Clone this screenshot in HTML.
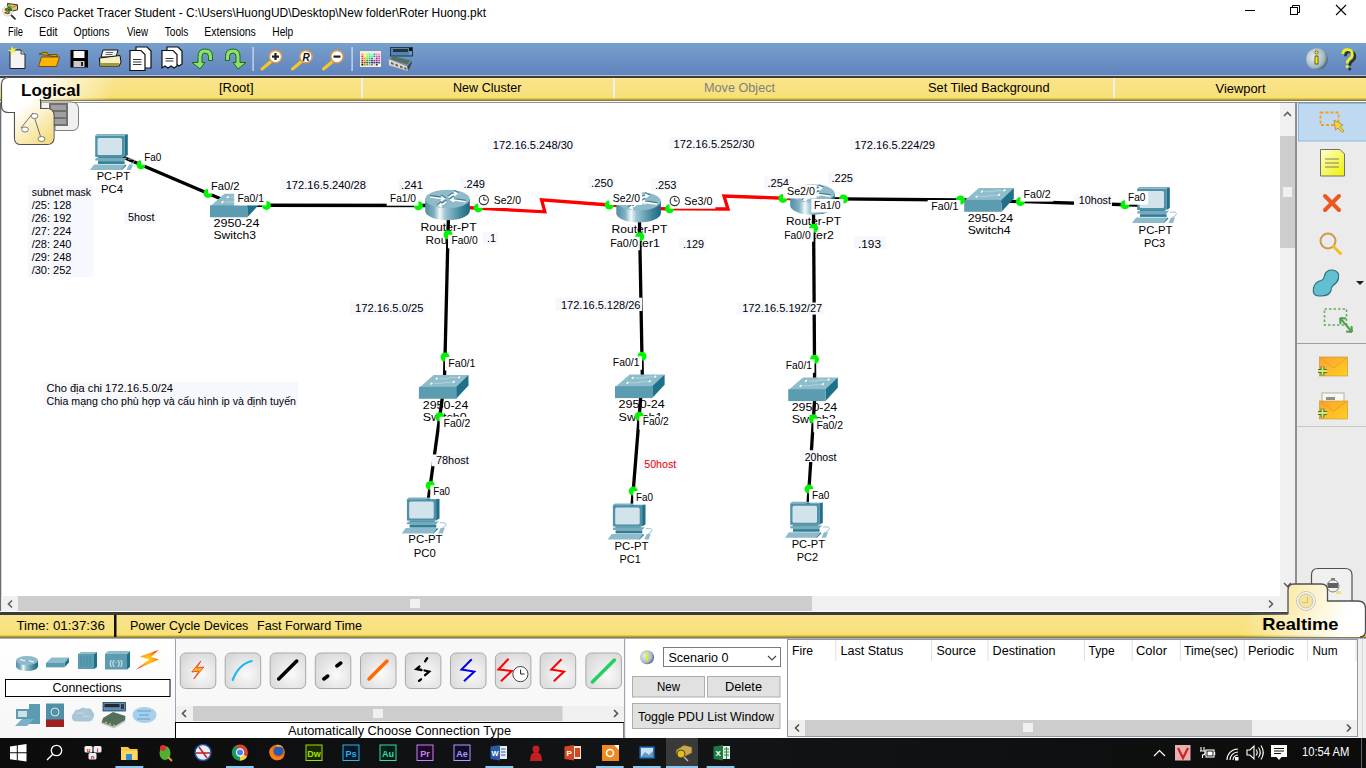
<!DOCTYPE html><html><head><meta charset="utf-8"><style>html,body{margin:0;padding:0;overflow:hidden;background:#fff}svg{display:block}text{font-family:"Liberation Sans",sans-serif}</style></head><body><svg width="1366" height="768" viewBox="0 0 1366 768"><rect x="0" y="0" width="1366" height="768" fill="#ffffff" /><path d="M7.5 3.5 L17.5 4.8 L17.5 9.8 L10.5 11.5 L7.5 9.5 Z" fill="#e8c070" stroke="#2a2010" stroke-width="0.9"/><path d="M8 4 L12.5 7.5 L17.5 5" fill="none" stroke="#806020" stroke-width="0.7"/><circle cx="7.5" cy="11" r="5" fill="#f4f4f4" stroke="#c0c8d0" stroke-width="0.8"/><path d="M7.5 6 A5 5 0 0 1 12.5 11 L7.5 11 Z" fill="#109010"/><text x="7.3" y="14.2" font-size="8.5" font-weight="bold" fill="#e0b800" stroke="#302000" stroke-width="0.5" text-anchor="middle">S</text><line x1="11.5" y1="15.5" x2="15" y2="18.8" stroke="#303030" stroke-width="1.8" stroke-linecap="round"/><text x="24" y="16.5" font-size="12" fill="#000" font-weight="normal" text-anchor="start" textLength="462" lengthAdjust="spacingAndGlyphs" >Cisco Packet Tracer Student - C:\Users\HuongUD\Desktop\New folder\Roter Huong.pkt</text><line x1="1245" y1="10.5" x2="1255" y2="10.5" stroke="#000" stroke-width="1" /><rect x="1290.5" y="7.5" width="7" height="7" fill="none" stroke="#000" stroke-width="1"/><path d="M1292.5 7.5 V5.5 H1299.5 V12.5 H1297.5" fill="none" stroke="#000" stroke-width="1"/><path d="M1336 5 L1346 15 M1346 5 L1336 15" stroke="#000" stroke-width="1.1"/><text x="8" y="36" font-size="12" fill="#000" font-weight="normal" text-anchor="start" textLength="15" lengthAdjust="spacingAndGlyphs" >File</text><text x="39" y="36" font-size="12" fill="#000" font-weight="normal" text-anchor="start" textLength="18.5" lengthAdjust="spacingAndGlyphs" >Edit</text><text x="73.6" y="36" font-size="12" fill="#000" font-weight="normal" text-anchor="start" textLength="36" lengthAdjust="spacingAndGlyphs" >Options</text><text x="127" y="36" font-size="12" fill="#000" font-weight="normal" text-anchor="start" textLength="21" lengthAdjust="spacingAndGlyphs" >View</text><text x="164.7" y="36" font-size="12" fill="#000" font-weight="normal" text-anchor="start" textLength="23.7" lengthAdjust="spacingAndGlyphs" >Tools</text><text x="204.3" y="36" font-size="12" fill="#000" font-weight="normal" text-anchor="start" textLength="51.6" lengthAdjust="spacingAndGlyphs" >Extensions</text><text x="272.3" y="36" font-size="12" fill="#000" font-weight="normal" text-anchor="start" textLength="21" lengthAdjust="spacingAndGlyphs" >Help</text><defs><linearGradient id="tb" x1="0" y1="0" x2="0" y2="1"><stop offset="0" stop-color="#76a0cc"/><stop offset="1" stop-color="#6283bd"/></linearGradient><linearGradient id="yb" x1="0" y1="0" x2="0" y2="1"><stop offset="0" stop-color="#f9e48c"/><stop offset="0.8" stop-color="#f8e07a"/><stop offset="0.86" stop-color="#fae35a"/><stop offset="1" stop-color="#7a6a38"/></linearGradient><linearGradient id="lg" x1="0" y1="0" x2="1" y2="0.3"><stop offset="0" stop-color="#ffffff"/><stop offset="0.35" stop-color="#ffffff"/><stop offset="1" stop-color="#f8e07c"/></linearGradient></defs><rect x="0" y="43" width="1366" height="32" fill="url(#tb)" /><rect x="0" y="75" width="1366" height="1" fill="#b8c4d4" /><rect x="0" y="76" width="1366" height="2" fill="#3c3c38" /><rect x="0" y="78" width="1366" height="23" fill="url(#yb)" /><rect x="0" y="78" width="1366" height="1" fill="#fde88c" /><rect x="0" y="101" width="1366" height="1" fill="#ffffff" /><rect x="0" y="102" width="1366" height="1" fill="#8a9098" /><rect x="361" y="78" width="2" height="20" fill="#eef0f4" /><rect x="613" y="78" width="2" height="20" fill="#eef0f4" /><rect x="1113" y="78" width="2" height="20" fill="#eef0f4" /><text x="219" y="92" font-size="12" fill="#000" font-weight="normal" text-anchor="start" textLength="34.5" lengthAdjust="spacingAndGlyphs" >[Root]</text><text x="453" y="92" font-size="12" fill="#000" font-weight="normal" text-anchor="start" textLength="68.5" lengthAdjust="spacingAndGlyphs" >New Cluster</text><text x="704" y="92" font-size="12" fill="#808080" font-weight="normal" text-anchor="start" textLength="71" lengthAdjust="spacingAndGlyphs" >Move Object</text><text x="928" y="92" font-size="12" fill="#000" font-weight="normal" text-anchor="start" textLength="121.5" lengthAdjust="spacingAndGlyphs" >Set Tiled Background</text><text x="1215.5" y="93" font-size="12" fill="#000" font-weight="normal" text-anchor="start" textLength="50" lengthAdjust="spacingAndGlyphs" >Viewport</text><rect x="0" y="103" width="1280" height="493" fill="#ffffff" /><rect x="0" y="103" width="1.3" height="509" fill="#6a6e74" /><rect x="1280" y="103" width="15" height="493" fill="#f0f0f0" /><rect x="1280" y="136" width="15" height="112" fill="#cdcdcd" /><rect x="1283" y="187" width="9" height="10" fill="#f0f0f0" /><path d="M1284 116 L1287.5 112.5 L1291 116" fill="none" stroke="#606060" stroke-width="1.6"/><path d="M1284 583 L1287.5 586.5 L1291 583" fill="none" stroke="#606060" stroke-width="1.6"/><rect x="1.3" y="596" width="1294" height="15" fill="#f0f0f0" /><rect x="18" y="596" width="794" height="15" fill="#cdcdcd" /><rect x="410" y="599" width="10" height="9" fill="#f0f0f0" /><path d="M12 600.5 L8.5 604 L12 607.5" fill="none" stroke="#606060" stroke-width="1.6"/><path d="M1269 600.5 L1272.5 604 L1269 607.5" fill="none" stroke="#606060" stroke-width="1.6"/><rect x="1295" y="102" width="2" height="511" fill="#8c9096" /><rect x="1297" y="103" width="69" height="510" fill="#ebebeb" /><defs><linearGradient id="rside" x1="0" y1="0" x2="1" y2="0"><stop offset="0" stop-color="#4f8fa5"/><stop offset="0.2" stop-color="#7fb0c0"/><stop offset="0.33" stop-color="#f4f9fb"/><stop offset="0.45" stop-color="#9cc4d2"/><stop offset="0.8" stop-color="#3f869d"/><stop offset="1" stop-color="#1c6a83"/></linearGradient></defs><text x="96.7" y="180" font-size="11" fill="#000" font-weight="normal" text-anchor="start" textLength="33.3" lengthAdjust="spacingAndGlyphs" >PC-PT</text><text x="101" y="193" font-size="11" fill="#000" font-weight="normal" text-anchor="start" textLength="22" lengthAdjust="spacingAndGlyphs" >PC4</text><text x="213.5" y="226.5" font-size="11" fill="#000" font-weight="normal" text-anchor="start" textLength="46" lengthAdjust="spacingAndGlyphs" >2950-24</text><text x="213.5" y="239" font-size="11" fill="#000" font-weight="normal" text-anchor="start" textLength="42.5" lengthAdjust="spacingAndGlyphs" >Switch3</text><text x="420.6" y="231" font-size="11" fill="#000" font-weight="normal" text-anchor="start" textLength="56" lengthAdjust="spacingAndGlyphs" >Router-PT</text><text x="425.6" y="244" font-size="11" fill="#000" font-weight="normal" text-anchor="start" textLength="42" lengthAdjust="spacingAndGlyphs" >Router0</text><text x="611.6" y="233.3" font-size="11" fill="#000" font-weight="normal" text-anchor="start" textLength="55.7" lengthAdjust="spacingAndGlyphs" >Router-PT</text><text x="616" y="247.3" font-size="11" fill="#000" font-weight="normal" text-anchor="start" textLength="44" lengthAdjust="spacingAndGlyphs" >Router1</text><text x="786" y="224.7" font-size="11" fill="#000" font-weight="normal" text-anchor="start" textLength="55" lengthAdjust="spacingAndGlyphs" >Router-PT</text><text x="790" y="238.8" font-size="11" fill="#000" font-weight="normal" text-anchor="start" textLength="44" lengthAdjust="spacingAndGlyphs" >Router2</text><text x="967.7" y="221.6" font-size="11" fill="#000" font-weight="normal" text-anchor="start" textLength="45.6" lengthAdjust="spacingAndGlyphs" >2950-24</text><text x="967.7" y="234.4" font-size="11" fill="#000" font-weight="normal" text-anchor="start" textLength="43" lengthAdjust="spacingAndGlyphs" >Switch4</text><text x="1138.6" y="233.9" font-size="11" fill="#000" font-weight="normal" text-anchor="start" textLength="33.9" lengthAdjust="spacingAndGlyphs" >PC-PT</text><text x="1143.9" y="246.9" font-size="11" fill="#000" font-weight="normal" text-anchor="start" textLength="21.3" lengthAdjust="spacingAndGlyphs" >PC3</text><text x="422.8" y="409" font-size="11" fill="#000" font-weight="normal" text-anchor="start" textLength="45.6" lengthAdjust="spacingAndGlyphs" >2950-24</text><text x="422.8" y="421.4" font-size="11" fill="#000" font-weight="normal" text-anchor="start" textLength="44" lengthAdjust="spacingAndGlyphs" >Switch0</text><text x="618.6" y="407.7" font-size="11" fill="#000" font-weight="normal" text-anchor="start" textLength="46.3" lengthAdjust="spacingAndGlyphs" >2950-24</text><text x="618.6" y="420.7" font-size="11" fill="#000" font-weight="normal" text-anchor="start" textLength="44" lengthAdjust="spacingAndGlyphs" >Switch1</text><text x="791.7" y="411" font-size="11" fill="#000" font-weight="normal" text-anchor="start" textLength="45.6" lengthAdjust="spacingAndGlyphs" >2950-24</text><text x="791.7" y="423.3" font-size="11" fill="#000" font-weight="normal" text-anchor="start" textLength="44" lengthAdjust="spacingAndGlyphs" >Switch2</text><text x="408.3" y="543.3" font-size="11" fill="#000" font-weight="normal" text-anchor="start" textLength="34.2" lengthAdjust="spacingAndGlyphs" >PC-PT</text><text x="413.7" y="556.8" font-size="11" fill="#000" font-weight="normal" text-anchor="start" textLength="22" lengthAdjust="spacingAndGlyphs" >PC0</text><text x="614.5" y="550" font-size="11" fill="#000" font-weight="normal" text-anchor="start" textLength="33.9" lengthAdjust="spacingAndGlyphs" >PC-PT</text><text x="619.6" y="562.7" font-size="11" fill="#000" font-weight="normal" text-anchor="start" textLength="21.2" lengthAdjust="spacingAndGlyphs" >PC1</text><text x="791.7" y="548" font-size="11" fill="#000" font-weight="normal" text-anchor="start" textLength="33.3" lengthAdjust="spacingAndGlyphs" >PC-PT</text><text x="796.7" y="560.5" font-size="11" fill="#000" font-weight="normal" text-anchor="start" textLength="21.5" lengthAdjust="spacingAndGlyphs" >PC2</text><path d="M111 152 L234 204.5" stroke="#000" stroke-width="3.3"/><path d="M234 205.2 L447.5 205.5" stroke="#000" stroke-width="3.3"/><path d="M448.7 205 L444.3 387" stroke="#000" stroke-width="3.3"/><path d="M443.8 387 L426.2 515" stroke="#000" stroke-width="3.3"/><path d="M639.1 201 L642.5 386" stroke="#000" stroke-width="3.3"/><path d="M641.6 386 L630.9 520" stroke="#000" stroke-width="3.3"/><path d="M813.4 193 L814.7 389" stroke="#000" stroke-width="3.3"/><path d="M815.3 389 L807.1 519" stroke="#000" stroke-width="3.3"/><path d="M812 198.7 L990 200.25" stroke="#000" stroke-width="3.3"/><path d="M990 200.7 L1152 205.5" stroke="#000" stroke-width="3.3"/><path d="M447 206.5 L544.8 211.8 L541.6 199.8 L609.3 205 L638 206.5" fill="none" stroke="#ff0000" stroke-width="3.3" stroke-linejoin="miter"/><path d="M638 208.6 L728 209 L724 196 L790 198.5 L812 199" fill="none" stroke="#ff0000" stroke-width="3.3"/><g transform="translate(86,130)"><path d="M38.4 5.5 L41.8 4 L41.8 25 L38.4 27 Z" fill="#1f7088"/><path d="M9.2 5.6 L11 4 L41.8 4 L38.4 5.6 Z" fill="#7fb0c2"/><rect x="9.2" y="5.6" width="29.2" height="21.4" fill="#4f91a8"/><rect x="11.5" y="8" width="24.5" height="17" rx="1.5" fill="#d3e3eb"/><rect x="12" y="27" width="25" height="1.8" fill="#2f7e96"/><path d="M9.2 28.8 L11 27.8 L41.2 27.8 L38.5 30.5 L38.5 33.8 L12 33.8 L12 30.6 L9.2 30.6 Z" fill="#77abbc"/><rect x="12" y="31.5" width="26.5" height="2.3" fill="#2d7d95"/><path d="M8 34.4 L39.5 34.4 L35 40 L4 40 Z" fill="#8dbbcb"/><path d="M39.5 34.4 L40.5 35.5 L36 40 L35 40 Z" fill="#2d7d95"/><path d="M43 34.4 L47 34.4 L45 40 L40.5 40 Z" fill="#8dbbcb"/><path d="M42 29.3 Q48 28.5 48.5 30.5 Q48 33 44.5 34.4" fill="none" stroke="#8dbbcb" stroke-width="0.9"/></g><g transform="translate(1128,183)"><path d="M38.4 5.5 L41.8 4 L41.8 25 L38.4 27 Z" fill="#1f7088"/><path d="M9.2 5.6 L11 4 L41.8 4 L38.4 5.6 Z" fill="#7fb0c2"/><rect x="9.2" y="5.6" width="29.2" height="21.4" fill="#4f91a8"/><rect x="11.5" y="8" width="24.5" height="17" rx="1.5" fill="#d3e3eb"/><rect x="12" y="27" width="25" height="1.8" fill="#2f7e96"/><path d="M9.2 28.8 L11 27.8 L41.2 27.8 L38.5 30.5 L38.5 33.8 L12 33.8 L12 30.6 L9.2 30.6 Z" fill="#77abbc"/><rect x="12" y="31.5" width="26.5" height="2.3" fill="#2d7d95"/><path d="M8 34.4 L39.5 34.4 L35 40 L4 40 Z" fill="#8dbbcb"/><path d="M39.5 34.4 L40.5 35.5 L36 40 L35 40 Z" fill="#2d7d95"/><path d="M43 34.4 L47 34.4 L45 40 L40.5 40 Z" fill="#8dbbcb"/><path d="M42 29.3 Q48 28.5 48.5 30.5 Q48 33 44.5 34.4" fill="none" stroke="#8dbbcb" stroke-width="0.9"/></g><g transform="translate(397.7,493.6)"><path d="M38.4 5.5 L41.8 4 L41.8 25 L38.4 27 Z" fill="#1f7088"/><path d="M9.2 5.6 L11 4 L41.8 4 L38.4 5.6 Z" fill="#7fb0c2"/><rect x="9.2" y="5.6" width="29.2" height="21.4" fill="#4f91a8"/><rect x="11.5" y="8" width="24.5" height="17" rx="1.5" fill="#d3e3eb"/><rect x="12" y="27" width="25" height="1.8" fill="#2f7e96"/><path d="M9.2 28.8 L11 27.8 L41.2 27.8 L38.5 30.5 L38.5 33.8 L12 33.8 L12 30.6 L9.2 30.6 Z" fill="#77abbc"/><rect x="12" y="31.5" width="26.5" height="2.3" fill="#2d7d95"/><path d="M8 34.4 L39.5 34.4 L35 40 L4 40 Z" fill="#8dbbcb"/><path d="M39.5 34.4 L40.5 35.5 L36 40 L35 40 Z" fill="#2d7d95"/><path d="M43 34.4 L47 34.4 L45 40 L40.5 40 Z" fill="#8dbbcb"/><path d="M42 29.3 Q48 28.5 48.5 30.5 Q48 33 44.5 34.4" fill="none" stroke="#8dbbcb" stroke-width="0.9"/></g><g transform="translate(603.7,499.5)"><path d="M38.4 5.5 L41.8 4 L41.8 25 L38.4 27 Z" fill="#1f7088"/><path d="M9.2 5.6 L11 4 L41.8 4 L38.4 5.6 Z" fill="#7fb0c2"/><rect x="9.2" y="5.6" width="29.2" height="21.4" fill="#4f91a8"/><rect x="11.5" y="8" width="24.5" height="17" rx="1.5" fill="#d3e3eb"/><rect x="12" y="27" width="25" height="1.8" fill="#2f7e96"/><path d="M9.2 28.8 L11 27.8 L41.2 27.8 L38.5 30.5 L38.5 33.8 L12 33.8 L12 30.6 L9.2 30.6 Z" fill="#77abbc"/><rect x="12" y="31.5" width="26.5" height="2.3" fill="#2d7d95"/><path d="M8 34.4 L39.5 34.4 L35 40 L4 40 Z" fill="#8dbbcb"/><path d="M39.5 34.4 L40.5 35.5 L36 40 L35 40 Z" fill="#2d7d95"/><path d="M43 34.4 L47 34.4 L45 40 L40.5 40 Z" fill="#8dbbcb"/><path d="M42 29.3 Q48 28.5 48.5 30.5 Q48 33 44.5 34.4" fill="none" stroke="#8dbbcb" stroke-width="0.9"/></g><g transform="translate(781,497.8)"><path d="M38.4 5.5 L41.8 4 L41.8 25 L38.4 27 Z" fill="#1f7088"/><path d="M9.2 5.6 L11 4 L41.8 4 L38.4 5.6 Z" fill="#7fb0c2"/><rect x="9.2" y="5.6" width="29.2" height="21.4" fill="#4f91a8"/><rect x="11.5" y="8" width="24.5" height="17" rx="1.5" fill="#d3e3eb"/><rect x="12" y="27" width="25" height="1.8" fill="#2f7e96"/><path d="M9.2 28.8 L11 27.8 L41.2 27.8 L38.5 30.5 L38.5 33.8 L12 33.8 L12 30.6 L9.2 30.6 Z" fill="#77abbc"/><rect x="12" y="31.5" width="26.5" height="2.3" fill="#2d7d95"/><path d="M8 34.4 L39.5 34.4 L35 40 L4 40 Z" fill="#8dbbcb"/><path d="M39.5 34.4 L40.5 35.5 L36 40 L35 40 Z" fill="#2d7d95"/><path d="M43 34.4 L47 34.4 L45 40 L40.5 40 Z" fill="#8dbbcb"/><path d="M42 29.3 Q48 28.5 48.5 30.5 Q48 33 44.5 34.4" fill="none" stroke="#8dbbcb" stroke-width="0.9"/></g><g transform="translate(210,205.4)"><path d="M0 1 L37.3 1 L49.6 -11.8 L14.7 -11.8 Z" fill="#8ebccb"/><path d="M37.3 0 L49.6 -11.8 L49.6 -1.4 L37.3 11.9 Z" fill="#1f7189"/><rect x="0" y="0" width="37.3" height="11.9" fill="#5c9cb1"/><path d="M15 -3.6 H24 L25.5 -4.6 H33 M20.5 -8.2 H29 L30.5 -9.2 H38" stroke="#a9cdd9" stroke-width="1.3" fill="none"/><path d="M11.5 -2.6 l2 -1.5 M33.8 -4.3 l2 -1.5 M16.8 -7.6 l2 -1.5 M39.2 -8.8 l2 -1.5" stroke="#ffffff" stroke-width="1.6"/></g><g transform="translate(964.2,199.9)"><path d="M0 1 L37.3 1 L49.6 -11.8 L14.7 -11.8 Z" fill="#8ebccb"/><path d="M37.3 0 L49.6 -11.8 L49.6 -1.4 L37.3 11.9 Z" fill="#1f7189"/><rect x="0" y="0" width="37.3" height="11.9" fill="#5c9cb1"/><path d="M15 -3.6 H24 L25.5 -4.6 H33 M20.5 -8.2 H29 L30.5 -9.2 H38" stroke="#a9cdd9" stroke-width="1.3" fill="none"/><path d="M11.5 -2.6 l2 -1.5 M33.8 -4.3 l2 -1.5 M16.8 -7.6 l2 -1.5 M39.2 -8.8 l2 -1.5" stroke="#ffffff" stroke-width="1.6"/></g><g transform="translate(418.9,386.9)"><path d="M0 1 L37.3 1 L49.6 -11.8 L14.7 -11.8 Z" fill="#8ebccb"/><path d="M37.3 0 L49.6 -11.8 L49.6 -1.4 L37.3 11.9 Z" fill="#1f7189"/><rect x="0" y="0" width="37.3" height="11.9" fill="#5c9cb1"/><path d="M15 -3.6 H24 L25.5 -4.6 H33 M20.5 -8.2 H29 L30.5 -9.2 H38" stroke="#a9cdd9" stroke-width="1.3" fill="none"/><path d="M11.5 -2.6 l2 -1.5 M33.8 -4.3 l2 -1.5 M16.8 -7.6 l2 -1.5 M39.2 -8.8 l2 -1.5" stroke="#ffffff" stroke-width="1.6"/></g><g transform="translate(615,386.2)"><path d="M0 1 L37.3 1 L49.6 -11.8 L14.7 -11.8 Z" fill="#8ebccb"/><path d="M37.3 0 L49.6 -11.8 L49.6 -1.4 L37.3 11.9 Z" fill="#1f7189"/><rect x="0" y="0" width="37.3" height="11.9" fill="#5c9cb1"/><path d="M15 -3.6 H24 L25.5 -4.6 H33 M20.5 -8.2 H29 L30.5 -9.2 H38" stroke="#a9cdd9" stroke-width="1.3" fill="none"/><path d="M11.5 -2.6 l2 -1.5 M33.8 -4.3 l2 -1.5 M16.8 -7.6 l2 -1.5 M39.2 -8.8 l2 -1.5" stroke="#ffffff" stroke-width="1.6"/></g><g transform="translate(788.2,389.2)"><path d="M0 1 L37.3 1 L49.6 -11.8 L14.7 -11.8 Z" fill="#8ebccb"/><path d="M37.3 0 L49.6 -11.8 L49.6 -1.4 L37.3 11.9 Z" fill="#1f7189"/><rect x="0" y="0" width="37.3" height="11.9" fill="#5c9cb1"/><path d="M15 -3.6 H24 L25.5 -4.6 H33 M20.5 -8.2 H29 L30.5 -9.2 H38" stroke="#a9cdd9" stroke-width="1.3" fill="none"/><path d="M11.5 -2.6 l2 -1.5 M33.8 -4.3 l2 -1.5 M16.8 -7.6 l2 -1.5 M39.2 -8.8 l2 -1.5" stroke="#ffffff" stroke-width="1.6"/></g><g transform="translate(447.5,199)"><path d="M-22.3 0 L-22.3 12 A22.3 9.2 0 0 0 22.3 12 L22.3 0 Z" fill="url(#rside)"/><ellipse cx="0" cy="0" rx="22.3" ry="9.2" fill="#8fbaca"/><path d="M-17.5 -2 L-4.5 -0.3 M-6.5 -2.6 L-3.2 -0.3 L-6.8 1.5 M1 -1.5 Q4 -4.5 8.5 -5.5 M6 -7.3 L9.5 -5.6 L6.8 -3.5 M18.3 2.8 L4.5 0.8 M6.5 -1.3 L3.3 0.7 L6.8 2.8 M-1 2.5 Q-4 5.5 -8 6.5 M-5.5 8 L-8.8 6.5 L-6.2 4.3" transform="translate(0,-0.9)" stroke="#3d7d93" stroke-width="2.4" fill="none"/><path d="M-17.5 -2 L-4.5 -0.3 M-6.5 -2.6 L-3.2 -0.3 L-6.8 1.5 M1 -1.5 Q4 -4.5 8.5 -5.5 M6 -7.3 L9.5 -5.6 L6.8 -3.5 M18.3 2.8 L4.5 0.8 M6.5 -1.3 L3.3 0.7 L6.8 2.8 M-1 2.5 Q-4 5.5 -8 6.5 M-5.5 8 L-8.8 6.5 L-6.2 4.3" stroke="#ffffff" stroke-width="1.6" fill="none"/></g><g transform="translate(638.6,201.3)"><path d="M-22.3 0 L-22.3 12 A22.3 9.2 0 0 0 22.3 12 L22.3 0 Z" fill="url(#rside)"/><ellipse cx="0" cy="0" rx="22.3" ry="9.2" fill="#8fbaca"/><path d="M-17.5 -2 L-4.5 -0.3 M-6.5 -2.6 L-3.2 -0.3 L-6.8 1.5 M1 -1.5 Q4 -4.5 8.5 -5.5 M6 -7.3 L9.5 -5.6 L6.8 -3.5 M18.3 2.8 L4.5 0.8 M6.5 -1.3 L3.3 0.7 L6.8 2.8 M-1 2.5 Q-4 5.5 -8 6.5 M-5.5 8 L-8.8 6.5 L-6.2 4.3" transform="translate(0,-0.9)" stroke="#3d7d93" stroke-width="2.4" fill="none"/><path d="M-17.5 -2 L-4.5 -0.3 M-6.5 -2.6 L-3.2 -0.3 L-6.8 1.5 M1 -1.5 Q4 -4.5 8.5 -5.5 M6 -7.3 L9.5 -5.6 L6.8 -3.5 M18.3 2.8 L4.5 0.8 M6.5 -1.3 L3.3 0.7 L6.8 2.8 M-1 2.5 Q-4 5.5 -8 6.5 M-5.5 8 L-8.8 6.5 L-6.2 4.3" stroke="#ffffff" stroke-width="1.6" fill="none"/></g><g transform="translate(812.5,193.5)"><path d="M-22.3 0 L-22.3 12 A22.3 9.2 0 0 0 22.3 12 L22.3 0 Z" fill="url(#rside)"/><ellipse cx="0" cy="0" rx="22.3" ry="9.2" fill="#8fbaca"/><path d="M-17.5 -2 L-4.5 -0.3 M-6.5 -2.6 L-3.2 -0.3 L-6.8 1.5 M1 -1.5 Q4 -4.5 8.5 -5.5 M6 -7.3 L9.5 -5.6 L6.8 -3.5 M18.3 2.8 L4.5 0.8 M6.5 -1.3 L3.3 0.7 L6.8 2.8 M-1 2.5 Q-4 5.5 -8 6.5 M-5.5 8 L-8.8 6.5 L-6.2 4.3" transform="translate(0,-0.9)" stroke="#3d7d93" stroke-width="2.4" fill="none"/><path d="M-17.5 -2 L-4.5 -0.3 M-6.5 -2.6 L-3.2 -0.3 L-6.8 1.5 M1 -1.5 Q4 -4.5 8.5 -5.5 M6 -7.3 L9.5 -5.6 L6.8 -3.5 M18.3 2.8 L4.5 0.8 M6.5 -1.3 L3.3 0.7 L6.8 2.8 M-1 2.5 Q-4 5.5 -8 6.5 M-5.5 8 L-8.8 6.5 L-6.2 4.3" stroke="#ffffff" stroke-width="1.6" fill="none"/></g><circle cx="141" cy="164.7" r="4.5" fill="#00f400"/><circle cx="208" cy="193.4" r="4.5" fill="#00f400"/><circle cx="266.4" cy="205.4" r="4.5" fill="#00f400"/><circle cx="418.4" cy="205.7" r="4.5" fill="#00f400"/><circle cx="478.3" cy="207.9" r="4.5" fill="#00f400"/><circle cx="448" cy="234.8" r="4.5" fill="#00f400"/><circle cx="609.3" cy="205" r="4.5" fill="#00f400"/><circle cx="669.6" cy="208.7" r="4.5" fill="#00f400"/><circle cx="639.8" cy="236.8" r="4.5" fill="#00f400"/><circle cx="783" cy="198.4" r="4.5" fill="#00f400"/><circle cx="843.5" cy="199" r="4.5" fill="#00f400"/><circle cx="813.6" cy="228.2" r="4.5" fill="#00f400"/><circle cx="960.5" cy="200" r="4.5" fill="#00f400"/><circle cx="1020.4" cy="201.6" r="4.5" fill="#00f400"/><circle cx="1125" cy="204.7" r="4.5" fill="#00f400"/><circle cx="445" cy="357" r="4.5" fill="#00f400"/><circle cx="439.7" cy="416.8" r="4.5" fill="#00f400"/><circle cx="430.3" cy="485.4" r="4.5" fill="#00f400"/><circle cx="642" cy="356.3" r="4.5" fill="#00f400"/><circle cx="639.2" cy="416.2" r="4.5" fill="#00f400"/><circle cx="633.2" cy="491.1" r="4.5" fill="#00f400"/><circle cx="814.5" cy="359.3" r="4.5" fill="#00f400"/><circle cx="813.4" cy="418.8" r="4.5" fill="#00f400"/><circle cx="809" cy="489.1" r="4.5" fill="#00f400"/><rect x="281" y="179" width="87" height="13" fill="#f7f8fd" /><text x="285.7" y="189" font-size="11" fill="#000" font-weight="normal" text-anchor="start" textLength="80.3" lengthAdjust="spacingAndGlyphs" >172.16.5.240/28</text><rect x="488" y="139" width="87" height="13" fill="#f7f8fd" /><text x="492.8" y="148.7" font-size="11" fill="#000" font-weight="normal" text-anchor="start" textLength="80.2" lengthAdjust="spacingAndGlyphs" >172.16.5.248/30</text><rect x="669" y="137.2" width="87" height="12.8" fill="#f7f8fd" /><text x="673.6" y="147.6" font-size="11" fill="#000" font-weight="normal" text-anchor="start" textLength="80.8" lengthAdjust="spacingAndGlyphs" >172.16.5.252/30</text><rect x="850" y="138.3" width="87" height="12.7" fill="#f7f8fd" /><text x="854.4" y="148.7" font-size="11" fill="#000" font-weight="normal" text-anchor="start" textLength="80.6" lengthAdjust="spacingAndGlyphs" >172.16.5.224/29</text><rect x="350" y="301.7" width="75" height="13.3" fill="#f7f8fd" /><text x="355" y="312" font-size="11" fill="#000" font-weight="normal" text-anchor="start" textLength="68.5" lengthAdjust="spacingAndGlyphs" >172.16.5.0/25</text><rect x="555.5" y="297.7" width="86.7" height="13.3" fill="#f7f8fd" /><text x="561" y="308.7" font-size="11" fill="#000" font-weight="normal" text-anchor="start" textLength="79.5" lengthAdjust="spacingAndGlyphs" >172.16.5.128/26</text><rect x="736.7" y="302.5" width="86.7" height="12.1" fill="#f7f8fd" /><text x="742.2" y="312.4" font-size="11" fill="#000" font-weight="normal" text-anchor="start" textLength="80.1" lengthAdjust="spacingAndGlyphs" >172.16.5.192/27</text><rect x="398" y="179.3" width="27" height="12.1" fill="#f7f8fd" /><text x="401" y="189.4" font-size="11" fill="#000" font-weight="normal" text-anchor="start" textLength="22" lengthAdjust="spacingAndGlyphs" >.241</text><rect x="460" y="177" width="26.5" height="12.8" fill="#f7f8fd" /><text x="463.5" y="187.5" font-size="11" fill="#000" font-weight="normal" text-anchor="start" textLength="21.5" lengthAdjust="spacingAndGlyphs" >.249</text><rect x="588" y="176" width="27" height="12.8" fill="#f7f8fd" /><text x="591" y="186.6" font-size="11" fill="#000" font-weight="normal" text-anchor="start" textLength="22" lengthAdjust="spacingAndGlyphs" >.250</text><rect x="651" y="178.2" width="27" height="12.8" fill="#f7f8fd" /><text x="655" y="189" font-size="11" fill="#000" font-weight="normal" text-anchor="start" textLength="21.5" lengthAdjust="spacingAndGlyphs" >.253</text><rect x="764" y="176" width="27" height="13" fill="#f7f8fd" /><text x="767.5" y="186.7" font-size="11" fill="#000" font-weight="normal" text-anchor="start" textLength="21.5" lengthAdjust="spacingAndGlyphs" >.254</text><rect x="828" y="171.4" width="26.6" height="12.3" fill="#f7f8fd" /><text x="831.5" y="181.7" font-size="11" fill="#000" font-weight="normal" text-anchor="start" textLength="21.5" lengthAdjust="spacingAndGlyphs" >.225</text><rect x="483" y="232" width="15" height="12.7" fill="#f7f8fd" /><text x="487" y="242" font-size="11" fill="#000" font-weight="normal" text-anchor="start" textLength="9" lengthAdjust="spacingAndGlyphs" >.1</text><rect x="679" y="237.4" width="27" height="12.3" fill="#f7f8fd" /><text x="683" y="247.7" font-size="11" fill="#000" font-weight="normal" text-anchor="start" textLength="21" lengthAdjust="spacingAndGlyphs" >.129</text><rect x="854" y="236" width="32" height="13" fill="#f7f8fd" /><text x="858" y="247.5" font-size="11" fill="#000" font-weight="normal" text-anchor="start" textLength="23" lengthAdjust="spacingAndGlyphs" >.193</text><rect x="124" y="211" width="32" height="13" fill="#f7f8fd" /><text x="128" y="221" font-size="11" fill="#000" font-weight="normal" text-anchor="start" textLength="26.4" lengthAdjust="spacingAndGlyphs" >5host</text><rect x="1074" y="193.8" width="38" height="13.0" fill="#f7f8fd" /><text x="1078.7" y="203.6" font-size="11" fill="#000" font-weight="normal" text-anchor="start" textLength="32.3" lengthAdjust="spacingAndGlyphs" >10host</text><rect x="431.5" y="454.4" width="38.1" height="11.8" fill="#f7f8fd" /><text x="436" y="464" font-size="11" fill="#000" font-weight="normal" text-anchor="start" textLength="32.7" lengthAdjust="spacingAndGlyphs" >78host</text><rect x="640" y="457.8" width="38" height="12.7" fill="#f7f8fd" /><text x="644.2" y="468" font-size="11" fill="#e80000" font-weight="normal" text-anchor="start" textLength="32.1" lengthAdjust="spacingAndGlyphs" >50host</text><rect x="800" y="450.2" width="37.7" height="11.8" fill="#f7f8fd" /><text x="804.7" y="460.5" font-size="11" fill="#000" font-weight="normal" text-anchor="start" textLength="31.7" lengthAdjust="spacingAndGlyphs" >20host</text><rect x="141" y="151.2" width="22.9" height="13.5" fill="#ffffff" /><text x="144.2" y="161" font-size="11" fill="#000" font-weight="normal" text-anchor="start" textLength="17.2" lengthAdjust="spacingAndGlyphs" >Fa0</text><rect x="208" y="179.9" width="34.2" height="13.5" fill="#ffffff" /><text x="211" y="190" font-size="11" fill="#000" font-weight="normal" text-anchor="start" textLength="28.5" lengthAdjust="spacingAndGlyphs" >Fa0/2</text><rect x="234.2" y="191.9" width="32.2" height="13.5" fill="#ffffff" /><text x="237.5" y="202" font-size="11" fill="#000" font-weight="normal" text-anchor="start" textLength="26.5" lengthAdjust="spacingAndGlyphs" >Fa0/1</text><rect x="386.7" y="192.2" width="31.7" height="13.5" fill="#ffffff" /><text x="390" y="202" font-size="11" fill="#000" font-weight="normal" text-anchor="start" textLength="26" lengthAdjust="spacingAndGlyphs" >Fa1/0</text><rect x="478.3" y="194.4" width="45.0" height="13.5" fill="#ffffff" /><text x="493.7" y="204" font-size="11" fill="#000" font-weight="normal" text-anchor="start" textLength="27.3" lengthAdjust="spacingAndGlyphs" >Se2/0</text><rect x="448" y="234.8" width="32.0" height="13.5" fill="#ffffff" /><text x="451.4" y="244" font-size="11" fill="#000" font-weight="normal" text-anchor="start" textLength="26.3" lengthAdjust="spacingAndGlyphs" >Fa0/0</text><rect x="609.3" y="191.5" width="32.9" height="13.5" fill="#ffffff" /><text x="612.8" y="202" font-size="11" fill="#000" font-weight="normal" text-anchor="start" textLength="27.2" lengthAdjust="spacingAndGlyphs" >Se2/0</text><rect x="669.6" y="195.2" width="45.8" height="13.5" fill="#ffffff" /><text x="684.3" y="205" font-size="11" fill="#000" font-weight="normal" text-anchor="start" textLength="28.1" lengthAdjust="spacingAndGlyphs" >Se3/0</text><rect x="606.3" y="236.8" width="33.5" height="13.5" fill="#ffffff" /><text x="610.2" y="247.3" font-size="11" fill="#000" font-weight="normal" text-anchor="start" textLength="27.8" lengthAdjust="spacingAndGlyphs" >Fa0/0</text><rect x="783" y="184.9" width="33.7" height="13.5" fill="#ffffff" /><text x="787" y="195" font-size="11" fill="#000" font-weight="normal" text-anchor="start" textLength="28" lengthAdjust="spacingAndGlyphs" >Se2/0</text><rect x="811.3" y="199" width="32.2" height="13.5" fill="#ffffff" /><text x="814" y="209" font-size="11" fill="#000" font-weight="normal" text-anchor="start" textLength="26.5" lengthAdjust="spacingAndGlyphs" >Fa1/0</text><rect x="781.5" y="228.2" width="32.1" height="13.5" fill="#ffffff" /><text x="784.3" y="238.8" font-size="11" fill="#000" font-weight="normal" text-anchor="start" textLength="26.4" lengthAdjust="spacingAndGlyphs" >Fa0/0</text><rect x="927.7" y="200" width="32.8" height="13.5" fill="#ffffff" /><text x="931.3" y="210" font-size="11" fill="#000" font-weight="normal" text-anchor="start" textLength="27.1" lengthAdjust="spacingAndGlyphs" >Fa0/1</text><rect x="1020.4" y="188.1" width="32.9" height="13.5" fill="#ffffff" /><text x="1023.5" y="197.5" font-size="11" fill="#000" font-weight="normal" text-anchor="start" textLength="27.2" lengthAdjust="spacingAndGlyphs" >Fa0/2</text><rect x="1125" y="191.2" width="23.1" height="13.5" fill="#ffffff" /><text x="1128" y="200.5" font-size="11" fill="#000" font-weight="normal" text-anchor="start" textLength="17.4" lengthAdjust="spacingAndGlyphs" >Fa0</text><rect x="445" y="357" width="33.0" height="13.5" fill="#ffffff" /><text x="448.2" y="366.7" font-size="11" fill="#000" font-weight="normal" text-anchor="start" textLength="27.3" lengthAdjust="spacingAndGlyphs" >Fa0/1</text><rect x="439.7" y="416.8" width="32.4" height="13.5" fill="#ffffff" /><text x="443.6" y="426.6" font-size="11" fill="#000" font-weight="normal" text-anchor="start" textLength="26.7" lengthAdjust="spacingAndGlyphs" >Fa0/2</text><rect x="430.3" y="485.4" width="22.5" height="13.5" fill="#ffffff" /><text x="433.2" y="495" font-size="11" fill="#000" font-weight="normal" text-anchor="start" textLength="16.8" lengthAdjust="spacingAndGlyphs" >Fa0</text><rect x="609.6" y="356.3" width="32.4" height="13.5" fill="#ffffff" /><text x="612.8" y="366" font-size="11" fill="#000" font-weight="normal" text-anchor="start" textLength="26.7" lengthAdjust="spacingAndGlyphs" >Fa0/1</text><rect x="639.2" y="416.2" width="31.8" height="13.5" fill="#ffffff" /><text x="642.7" y="425.3" font-size="11" fill="#000" font-weight="normal" text-anchor="start" textLength="26.1" lengthAdjust="spacingAndGlyphs" >Fa0/2</text><rect x="633.2" y="491.1" width="22.7" height="13.5" fill="#ffffff" /><text x="636" y="501" font-size="11" fill="#000" font-weight="normal" text-anchor="start" textLength="17" lengthAdjust="spacingAndGlyphs" >Fa0</text><rect x="782.7" y="359.3" width="31.8" height="13.5" fill="#ffffff" /><text x="785.8" y="368.6" font-size="11" fill="#000" font-weight="normal" text-anchor="start" textLength="26.1" lengthAdjust="spacingAndGlyphs" >Fa0/1</text><rect x="813.4" y="418.8" width="32.3" height="13.5" fill="#ffffff" /><text x="816.4" y="428.5" font-size="11" fill="#000" font-weight="normal" text-anchor="start" textLength="26.6" lengthAdjust="spacingAndGlyphs" >Fa0/2</text><rect x="809" y="489.1" width="23.0" height="13.5" fill="#ffffff" /><text x="812" y="498.9" font-size="11" fill="#000" font-weight="normal" text-anchor="start" textLength="17.3" lengthAdjust="spacingAndGlyphs" >Fa0</text><circle cx="483.8" cy="200" r="4.6" fill="#fff" stroke="#303030" stroke-width="1.1"/><path d="M483.8 197 V200 H486.6" stroke="#303030" stroke-width="1" fill="none"/><circle cx="674.7" cy="201" r="4.6" fill="#fff" stroke="#303030" stroke-width="1.1"/><path d="M674.7 198 V201 H677.5" stroke="#303030" stroke-width="1" fill="none"/><rect x="28" y="185.6" width="65" height="91.4" fill="#f7f8fd" /><text x="31.7" y="196" font-size="11" fill="#000" font-weight="normal" text-anchor="start" textLength="59.3" lengthAdjust="spacingAndGlyphs" >subnet mask</text><text x="31.7" y="209" font-size="11" fill="#000" font-weight="normal" text-anchor="start" >/25: 128</text><text x="31.7" y="222" font-size="11" fill="#000" font-weight="normal" text-anchor="start" >/26: 192</text><text x="31.7" y="235" font-size="11" fill="#000" font-weight="normal" text-anchor="start" >/27: 224</text><text x="31.7" y="248" font-size="11" fill="#000" font-weight="normal" text-anchor="start" >/28: 240</text><text x="31.7" y="261" font-size="11" fill="#000" font-weight="normal" text-anchor="start" >/29: 248</text><text x="31.7" y="274" font-size="11" fill="#000" font-weight="normal" text-anchor="start" >/30: 252</text><rect x="43" y="382" width="255" height="25.6" fill="#f7f8fd" /><text x="46.5" y="391.8" font-size="11" fill="#000" font-weight="normal" text-anchor="start" textLength="126.5" lengthAdjust="spacingAndGlyphs" >Cho địa chi 172.16.5.0/24</text><text x="46.5" y="404.6" font-size="11" fill="#000" font-weight="normal" text-anchor="start" textLength="249.5" lengthAdjust="spacingAndGlyphs" >Chia mạng cho phù hợp và cấu hình ip và định tuyến</text><path d="M10 50 H21 L25 54 V68.5 H10 Z" fill="#f4f4f4" stroke="#202020" stroke-width="1"/><path d="M21 50 V54 H25" fill="#d0d0d0" stroke="#202020" stroke-width="0.8"/><path d="M12 46 L13.5 49 L17 48 L14.5 50.5 L16.5 53.5 L13 52 L11 55 L10.8 51.5 L7.5 50.5 L11 49.5 Z" fill="#f6f040"/><path d="M39 54 L43 52.5 L47 52.5 L48 54.5 L57 54.5 L57 57 Z" fill="#e8a000" stroke="#5a4000" stroke-width="0.8"/><path d="M38.5 66.5 L41.5 57 L59.5 57 L56.5 66.5 Z" fill="#ffb400" stroke="#5a4000" stroke-width="0.8"/><rect x="70.5" y="50" width="17.5" height="17.5" fill="#000"/><rect x="73.5" y="51" width="11" height="7" fill="#f8f8f8"/><rect x="73.5" y="61" width="11" height="6" fill="#c8c8c8"/><rect x="81" y="62" width="2" height="4" fill="#202020"/><path d="M103 50 L118 50 L116 57 L101 57 Z" fill="#f4f4f4" stroke="#101010" stroke-width="1"/><path d="M99.5 58 L120 55.5 L121 62 L119 66.5 L100 66.5 Z" fill="#f4f0c0" stroke="#101010" stroke-width="1"/><rect x="100" y="63" width="19" height="3.5" fill="#a09840"/><path d="M106 52.5 H113 M105.5 54.5 H112.5" stroke="#404040" stroke-width="0.8"/><path d="M136 47 H147 L151 51 V68 H136 Z" fill="#fff" stroke="#101010" stroke-width="1.2"/><path d="M130 50.5 H141 L145 54.5 V70.5 H130 Z" fill="#fff" stroke="#101010" stroke-width="1.2"/><path d="M133 59.5 H141.5 M133 62 H141.5 M133 64.5 H141.5" stroke="#202020" stroke-width="0.9"/><path d="M167 47 H178 L182 51 V64 L179 66 L176 64 L173 66 L170 64 L167 66 Z" fill="#fff" stroke="#101010" stroke-width="1.2"/><path d="M162 50.5 H173 L177 54.5 V66 L174 68 L171 66 L168 68 L165 66 L162 68 Z" fill="#fff" stroke="#101010" stroke-width="1.2"/><path d="M165.5 58.5 H173.5 M165.5 61 H173.5" stroke="#202020" stroke-width="0.9"/><path d="M198 63 L198 57 Q198 49.5 205 49.5 Q212.5 49.5 212.5 57 L212.5 61 L208.5 61 L208.5 57 Q208.5 53.5 205 53.5 Q202 53.5 202 57 L202 63 L205 63 L200 69.5 L192 63 Z" fill="#90e070" stroke="#1a6a1a" stroke-width="1" transform="translate(0,-0.5)"/><path d="M240 63 L240 57 Q240 49.5 233 49.5 Q225.5 49.5 225.5 57 L225.5 61 L229.5 61 L229.5 57 Q229.5 53.5 233 53.5 Q236 53.5 236 57 L236 63 L233 63 L238 69.5 L246 63 Z" fill="#90e070" stroke="#1a6a1a" stroke-width="1" transform="translate(0,-0.5)"/><rect x="252.5" y="47" width="1.2" height="24" fill="#d8e2f0" /><rect x="351.5" y="47" width="1.2" height="24" fill="#d8e2f0" /><line x1="271.0" y1="61.5" x2="262.0" y2="69" stroke="#f8c820" stroke-width="3" stroke-linecap="round"/><circle cx="275.5" cy="56.6" r="6.2" fill="#fff" stroke="#d89850" stroke-width="1.6"/><path d="M272.0 56.6 H279.0 M275.5 53.1 V60.1" stroke="#202020" stroke-width="2.2"/><line x1="301.5" y1="61.5" x2="292.5" y2="69" stroke="#f8c820" stroke-width="3" stroke-linecap="round"/><circle cx="306" cy="56.6" r="6.2" fill="#fff" stroke="#d89850" stroke-width="1.6"/><text x="306" y="60.5" font-size="10" font-weight="bold" font-style="italic" text-anchor="middle" fill="#101010">R</text><line x1="332.5" y1="61.5" x2="323.5" y2="69" stroke="#f8c820" stroke-width="3" stroke-linecap="round"/><circle cx="337" cy="56.6" r="6.2" fill="#fff" stroke="#d89850" stroke-width="1.6"/><path d="M333.5 56.6 H340.5" stroke="#202020" stroke-width="2.2"/><rect x="360" y="51" width="21" height="16" fill="#f6eed4"/><rect x="361.5" y="53.5" width="1.8" height="1.5" fill="#f88" /><rect x="363.9" y="53.5" width="1.8" height="1.5" fill="#ff8" /><rect x="366.3" y="53.5" width="1.8" height="1.5" fill="#8f8" /><rect x="368.7" y="53.5" width="1.8" height="1.5" fill="#4f8" /><rect x="371.1" y="53.5" width="1.8" height="1.5" fill="#8ff" /><rect x="373.5" y="53.5" width="1.8" height="1.5" fill="#48f" /><rect x="375.9" y="53.5" width="1.8" height="1.5" fill="#f8c" /><rect x="378.3" y="53.5" width="1.8" height="1.5" fill="#f8f" /><rect x="361.5" y="55.6" width="1.8" height="1.5" fill="#f22" /><rect x="363.9" y="55.6" width="1.8" height="1.5" fill="#ff2" /><rect x="366.3" y="55.6" width="1.8" height="1.5" fill="#8f2" /><rect x="368.7" y="55.6" width="1.8" height="1.5" fill="#2f6" /><rect x="371.1" y="55.6" width="1.8" height="1.5" fill="#2ff" /><rect x="373.5" y="55.6" width="1.8" height="1.5" fill="#28c" /><rect x="375.9" y="55.6" width="1.8" height="1.5" fill="#88c" /><rect x="378.3" y="55.6" width="1.8" height="1.5" fill="#f2f" /><rect x="361.5" y="57.7" width="1.8" height="1.5" fill="#a66" /><rect x="363.9" y="57.7" width="1.8" height="1.5" fill="#f86" /><rect x="366.3" y="57.7" width="1.8" height="1.5" fill="#4f4" /><rect x="368.7" y="57.7" width="1.8" height="1.5" fill="#4a8" /><rect x="371.1" y="57.7" width="1.8" height="1.5" fill="#468" /><rect x="373.5" y="57.7" width="1.8" height="1.5" fill="#ccf" /><rect x="375.9" y="57.7" width="1.8" height="1.5" fill="#a24" /><rect x="378.3" y="57.7" width="1.8" height="1.5" fill="#f48" /><rect x="361.5" y="59.8" width="1.8" height="1.5" fill="#a22" /><rect x="363.9" y="59.8" width="1.8" height="1.5" fill="#f82" /><rect x="366.3" y="59.8" width="1.8" height="1.5" fill="#2a2" /><rect x="368.7" y="59.8" width="1.8" height="1.5" fill="#2a6" /><rect x="371.1" y="59.8" width="1.8" height="1.5" fill="#22f" /><rect x="373.5" y="59.8" width="1.8" height="1.5" fill="#44c" /><rect x="375.9" y="59.8" width="1.8" height="1.5" fill="#a2a" /><rect x="378.3" y="59.8" width="1.8" height="1.5" fill="#a4f" /><rect x="361.5" y="61.9" width="1.8" height="1.5" fill="#622" /><rect x="363.9" y="61.9" width="1.8" height="1.5" fill="#a42" /><rect x="366.3" y="61.9" width="1.8" height="1.5" fill="#262" /><rect x="368.7" y="61.9" width="1.8" height="1.5" fill="#266" /><rect x="371.1" y="61.9" width="1.8" height="1.5" fill="#228" /><rect x="373.5" y="61.9" width="1.8" height="1.5" fill="#226" /><rect x="375.9" y="61.9" width="1.8" height="1.5" fill="#424" /><rect x="378.3" y="61.9" width="1.8" height="1.5" fill="#62a" /><rect x="361.5" y="64.0" width="1.8" height="1.5" fill="#111" /><rect x="363.9" y="64.0" width="1.8" height="1.5" fill="#aa2" /><rect x="366.3" y="64.0" width="1.8" height="1.5" fill="#886" /><rect x="368.7" y="64.0" width="1.8" height="1.5" fill="#aaa" /><rect x="371.1" y="64.0" width="1.8" height="1.5" fill="#488" /><rect x="373.5" y="64.0" width="1.8" height="1.5" fill="#ddd" /><rect x="375.9" y="64.0" width="1.8" height="1.5" fill="#424" /><rect x="378.3" y="64.0" width="1.8" height="1.5" fill="#fff" /><rect x="390.5" y="47.5" width="22" height="8.5" fill="#4a8ab8" stroke="#283848" stroke-width="1"/><rect x="393" y="49" width="15" height="3" fill="#303030"/><rect x="409" y="48" width="3" height="3" fill="#101010"/><rect x="409.5" y="51.5" width="2" height="3" fill="#a0a0a0"/><path d="M390.2 59.1 L393 56.3 L411 60.6 L406.9 64.4 Z" fill="#55705c"/><path d="M388.8 59.3 L407.4 66.5 L407.9 71 L389 65.3 Z" fill="#d8d8d8"/><path d="M407.4 66.5 L411.7 61 L411.7 63.5 L407.9 71 Z" fill="#404040"/><path d="M391 62 l2.5 1 v2 l-2.5 -1 Z M395.5 63.7 l2.5 1 v2 l-2.5 -1 Z M400 65.4 l2.5 1 v2 l-2.5 -1 Z M404.2 67 l2.3 0.9 v2 l-2.3 -0.9 Z" fill="#6a6030"/><defs><radialGradient id="ig" cx="0.35" cy="0.4" r="0.7"><stop offset="0" stop-color="#e8ecf0"/><stop offset="0.7" stop-color="#a8b8c0"/><stop offset="1" stop-color="#305868"/></radialGradient></defs><circle cx="1317" cy="59" r="10.8" fill="url(#ig)"/><rect x="1315" y="56" width="3" height="8" fill="#f0f000" stroke="#101010" stroke-width="0.6"/><circle cx="1316.5" cy="52.5" r="1.6" fill="#f0f000" stroke="#101010" stroke-width="0.5"/><path d="M1342.8 54 Q1342.8 49.6 1347.5 49.6 Q1352.3 49.6 1352.3 54.3 Q1352.3 57.3 1349.2 59.2 Q1347.2 60.6 1347.2 63.6" transform="translate(2.6,2.2)" fill="none" stroke="#303030" stroke-width="2.6"/><circle cx="1349.8" cy="69" r="1.5" fill="#303030"/><path d="M1342.8 54 Q1342.8 49.6 1347.5 49.6 Q1352.3 49.6 1352.3 54.3 Q1352.3 57.3 1349.2 59.2 Q1347.2 60.6 1347.2 63.6" fill="none" stroke="#f0f020" stroke-width="2.6"/><circle cx="1347.2" cy="66.6" r="1.5" fill="#f0f020"/><path d="M41 102 H71 Q78.5 102 78.5 109 V124 Q78.5 130.5 72 130.5 H55 V110 H41 Z" fill="#f0f0f0" stroke="#707070" stroke-width="0.9"/><rect x="49" y="103" width="19" height="23" fill="#707070"/><rect x="51" y="105" width="15" height="5" fill="#a0a0a0"/><rect x="51" y="112" width="15" height="5" fill="#a0a0a0"/><rect x="51" y="119" width="15" height="5" fill="#a0a0a0"/><defs><linearGradient id="lt" gradientUnits="userSpaceOnUse" x1="0" y1="85" x2="110" y2="110"><stop offset="0" stop-color="#ffffff"/><stop offset="0.3" stop-color="#ffffff"/><stop offset="1" stop-color="#ffffff" stop-opacity="0"/></linearGradient><linearGradient id="lt2" gradientUnits="userSpaceOnUse" x1="22" y1="106" x2="54" y2="144"><stop offset="0" stop-color="#ffffff"/><stop offset="0.25" stop-color="#fdf6dc"/><stop offset="1" stop-color="#f3d870"/></linearGradient></defs><rect x="0" y="78" width="8" height="8" fill="#f4f4f4" /><path d="M1.5 100 V84 Q1.5 77 8.5 77 H200 V100 H40 V108.5 L46 108.5 Q54 108.5 54 116 V137 Q54 145 46 145 H22 Q14.5 145 14.5 137 V113 H9 Q1.5 113 1.5 106 Z" fill="url(#lt)" stroke="none"/><path d="M200 77.5 H8.5 Q1.5 77.5 1.5 84.5 V106 Q1.5 112.5 8.5 112.5 H14.5 V138 Q14.5 144.5 21 144.5 H47 Q54 144.5 54 137.5 V116 Q54 108.5 47 108.5 H40.5 V99" fill="none" stroke="#505050" stroke-width="1.2"/><path d="M15.1 101 H40 V109.1 H47 Q53.4 109.1 53.4 116 V137.5 Q53.4 144 47 144 H21.5 Q15.1 144 15.1 137.5 Z" fill="url(#lt2)"/><path d="M21 128 L33 113 L41 138" fill="none" stroke="#606060" stroke-width="0.9"/><ellipse cx="34.5" cy="116" rx="3.5" ry="2.5" fill="#fff" stroke="#606060" stroke-width="0.8"/><ellipse cx="25" cy="129.5" rx="3.5" ry="2.5" fill="#fff" stroke="#606060" stroke-width="0.8"/><ellipse cx="41.5" cy="139" rx="3.5" ry="2.5" fill="#fff" stroke="#606060" stroke-width="0.8"/><text x="21" y="95.6" font-size="17" fill="#000" font-weight="bold" text-anchor="start" textLength="59.5" lengthAdjust="spacingAndGlyphs" >Logical</text><rect x="1298.5" y="103.5" width="68" height="37.5" fill="#bfd9f0" stroke="#88bce8" stroke-width="1"/><rect x="1320.5" y="112.5" width="18" height="12.5" fill="none" stroke="#f0a020" stroke-width="1.8" stroke-dasharray="3 2"/><path d="M1334 120 L1343 125 L1340 126.5 L1344 131 L1342 132.5 L1338 128 L1335.5 130 Z" fill="#f8d040" stroke="#a08020" stroke-width="0.7"/><defs><linearGradient id="ng" x1="0" y1="0" x2="1" y2="1"><stop offset="0" stop-color="#ffffd0"/><stop offset="1" stop-color="#f0f000"/></linearGradient></defs><path d="M1320.5 149.5 H1340 L1344.5 154 V176 H1320.5 Z" fill="url(#ng)" stroke="#707070" stroke-width="1"/><path d="M1325 159 H1339 M1325 163 H1339 M1325 167 H1339" stroke="#808060" stroke-width="1"/><path d="M1325 196 L1339 210 M1339 196 L1325 210" stroke="#e85820" stroke-width="4" stroke-linecap="round"/><circle cx="1328" cy="241" r="7.5" fill="none" stroke="#d09850" stroke-width="2"/><line x1="1333.5" y1="246.5" x2="1340.5" y2="253.5" stroke="#f0c020" stroke-width="3" stroke-linecap="round"/><path d="M1319 296 Q1312 296 1313.5 288 Q1315 282 1321 280.5 Q1324 279.5 1324.5 275.5 Q1326 269.5 1333 270 Q1340 271.5 1338.5 278.5 Q1337.5 282.5 1333.5 285 Q1331 287 1331 290.5 Q1329.5 296.5 1319 296 Z" fill="#60c0cf" stroke="#306a78" stroke-width="1.1"/><path d="M1356 281 L1364 281 L1360 285 Z" fill="#202020"/><rect x="1324.5" y="309" width="22" height="16" fill="none" stroke="#60b060" stroke-width="1.6" stroke-dasharray="2.5 2"/><path d="M1340 318 L1352 332 M1340 318 L1340.5 324 M1340 318 L1346 318.5 M1352 332 L1351.5 326 M1352 332 L1346 331.5" stroke="#50a050" stroke-width="2"/><rect x="1297" y="343" width="69" height="1" fill="#a0a0a0" /><defs><linearGradient id="eg" x1="0" y1="0" x2="1" y2="1"><stop offset="0" stop-color="#ffa030"/><stop offset="1" stop-color="#ffd020"/></linearGradient></defs><rect x="1319.5" y="357" width="28" height="19" fill="url(#eg)" stroke="#c09030" stroke-width="0.6"/><path d="M1319.5 357 L1333.5 368 L1347.5 357" fill="none" stroke="#e8a020" stroke-width="1"/><path d="M1318 371 H1327 M1322.5 366.5 V375.5" stroke="#405020" stroke-width="3.6"/><path d="M1318 371 H1327 M1322.5 366.5 V375.5" stroke="#c0f080" stroke-width="2"/><rect x="1322" y="393" width="22" height="15" fill="#f8f8f0" stroke="#a0a090" stroke-width="0.8"/><rect x="1326" y="397" width="9" height="3" fill="#909090"/><rect x="1319.5" y="401" width="28" height="18" fill="url(#eg)" stroke="#c09030" stroke-width="0.6"/><path d="M1319.5 401 L1333.5 411 L1347.5 401" fill="none" stroke="#e8a020" stroke-width="1"/><path d="M1318 413 H1327 M1322.5 408.5 V417.5" stroke="#405020" stroke-width="3.6"/><path d="M1318 413 H1327 M1322.5 408.5 V417.5" stroke="#c0f080" stroke-width="2"/><rect x="1297" y="426" width="69" height="1" fill="#c8c8c8" /><rect x="0" y="612" width="1366" height="3" fill="#3a3a3a" /><defs><linearGradient id="sb" x1="0" y1="0" x2="0" y2="1"><stop offset="0" stop-color="#f9e48a"/><stop offset="0.8" stop-color="#f8e07a"/><stop offset="1" stop-color="#f0d050"/></linearGradient><linearGradient id="rt" gradientUnits="userSpaceOnUse" x1="1250" y1="600" x2="1345" y2="625"><stop offset="0" stop-color="#ffffff" stop-opacity="0"/><stop offset="1" stop-color="#ffffff" stop-opacity="1"/></linearGradient></defs><rect x="0" y="611" width="1366" height="1" fill="#ffffff" /><rect x="0" y="615" width="1366" height="23" fill="url(#yb)" /><rect x="0" y="638" width="1366" height="1" fill="#a8b0c0" /><rect x="114" y="615" width="2.5" height="22" fill="#101010" /><text x="16.4" y="630" font-size="12" fill="#000" font-weight="normal" text-anchor="start" textLength="88.5" lengthAdjust="spacingAndGlyphs" >Time: 01:37:36</text><text x="129.9" y="630" font-size="12" fill="#000" font-weight="normal" text-anchor="start" textLength="118.5" lengthAdjust="spacingAndGlyphs" >Power Cycle Devices</text><text x="257" y="630" font-size="12" fill="#000" font-weight="normal" text-anchor="start" textLength="105" lengthAdjust="spacingAndGlyphs" >Fast Forward Time</text><path d="M1311.5 601 V575 Q1311.5 568.5 1318 568.5 H1345 Q1352 568.5 1352 575 V601" fill="#f0f0f0" stroke="#505050" stroke-width="1.2"/><circle cx="1333" cy="586" r="6" fill="none" stroke="#808080" stroke-width="1"/><rect x="1328" y="583" width="10" height="5" fill="#606060"/><rect x="1331" y="578" width="4" height="2" fill="#808080"/><rect x="1336" y="591" width="5" height="3" fill="#f0e080"/><path d="M1288 615 V590 Q1288 584 1294 584 H1321 Q1327.5 584 1327.5 590 V601 H1358 Q1365.5 601 1365.5 609 V615 Z" fill="#f8e07c" stroke="none"/><path d="M1200 613.5 H1288 V590 Q1288 584 1294 584 H1321 Q1327.5 584 1327.5 590 V601 H1358 Q1365.5 601 1365.5 609 V631 Q1365.5 637 1359 637 H1200 Z" fill="url(#rt)" stroke="none"/><path d="M1200 613.5 H1288 V590 Q1288 584 1294 584 H1321 Q1327.5 584 1327.5 590 V601 H1358 Q1365.5 601 1365.5 609 V631 Q1365.5 636.5 1360 637" fill="none" stroke="#505050" stroke-width="1.3"/><circle cx="1306" cy="601" r="9.3" fill="none" stroke="#b0b0b0" stroke-width="0.9"/><circle cx="1306" cy="601" r="8.2" fill="none" stroke="#f4f4f4" stroke-width="1.6"/><circle cx="1306" cy="601" r="7" fill="#f8e498" stroke="#b8b8b0" stroke-width="0.8"/><path d="M1307.5 596.5 V602.5 H1302" fill="none" stroke="#d0c080" stroke-width="1"/><text x="1262.3" y="630.3" font-size="17" fill="#000" font-weight="bold" text-anchor="start" textLength="76.2" lengthAdjust="spacingAndGlyphs" >Realtime</text><rect x="0" y="639" width="1366" height="99" fill="#ffffff" /><defs><linearGradient id="bp" x1="0" y1="0" x2="0" y2="1"><stop offset="0" stop-color="#ffffff"/><stop offset="1" stop-color="#f6f6f6"/></linearGradient><radialGradient id="btn" cx="0.6" cy="0.6" r="0.7"><stop offset="0" stop-color="#fafafa"/><stop offset="1" stop-color="#d8d8d8"/></radialGradient></defs><rect x="0" y="639" width="175" height="99" fill="url(#bp)" /><g transform="translate(27,660.5) scale(0.5)"><path d="M-22 0 L-22 12 A22 9 0 0 0 22 12 L22 0 Z" fill="url(#rside)"/><ellipse cx="0" cy="0" rx="22" ry="9" fill="#8fbaca"/><path d="M-14 -2 L-4 0.5 M14 3 L4 0.5" stroke="#fff" stroke-width="2"/></g><g transform="translate(46,663) scale(0.62)"><path d="M0 0 L30 0 L37 -9 L9 -9 Z" fill="#8ebccb"/><path d="M30 0 L37 -9 L37 -1 L30 7 Z" fill="#1f7189"/><rect x="0" y="0" width="30" height="7" fill="#5c9cb1"/></g><rect x="78" y="654" width="16" height="15" fill="#5c9cb1"/><path d="M94 654 L97 652 V667 L94 669 Z" fill="#1f7189"/><path d="M78 654 L81 652 H97 L94 654 Z" fill="#8ebccb"/><path d="M81 656 V667 M84 656 V667 M87 656 V667 M90 656 V667" stroke="#3a7f95" stroke-width="0.6"/><rect x="105" y="654" width="22" height="15.5" fill="#5c9cb1"/><path d="M127 654 L130 651 V667 L127 669.5 Z" fill="#1f7189"/><path d="M105 654 L108 651 H130 L127 654 Z" fill="#8ebccb"/><text x="116" y="665" font-size="8" fill="#fff" text-anchor="middle">((·))</text><defs><radialGradient id="bolt" cx="0.5" cy="0.5" r="0.6"><stop offset="0" stop-color="#ffe020"/><stop offset="0.6" stop-color="#ff9010"/><stop offset="1" stop-color="#f02010"/></radialGradient></defs><path d="M158.5 650 L140 656.5 L149 659.5 L136 669.5 L159 659.5 L151 657 Z" fill="url(#bolt)"/><rect x="5.5" y="679.5" width="164.5" height="17" fill="#fff" stroke="#000" stroke-width="1"/><text x="52.5" y="692.2" font-size="12" fill="#000" font-weight="normal" text-anchor="start" textLength="69.3" lengthAdjust="spacingAndGlyphs" >Connections</text><rect x="16" y="709" width="14" height="10" fill="#5c9cb1"/><rect x="18" y="711" width="9" height="6" fill="#d0e0e8"/><rect x="29" y="704" width="11" height="20" fill="#5c9cb1"/><path d="M15 726 L22 719 L34 719 L27 726 Z" fill="#7ab0c8"/><rect x="46" y="703.5" width="18" height="17" fill="#4f91a8"/><rect x="46" y="719.5" width="18" height="7.5" fill="#a02020"/><circle cx="55" cy="712" r="4" fill="none" stroke="#fff" stroke-width="0.8"/><path d="M73 720.5 Q70 716 74 713 Q74.5 709 79 709.5 Q82 706.5 86.5 708.5 Q91 707.5 92.5 711.5 Q95.5 714 93 718.5 Q92 721.5 88 721.5 L77 721.5 Q74 721.5 73 720.5 Z" fill="#a9c6d6"/><path d="M76 714 Q80 712 84 714 M83 717 Q87 715 90 717" stroke="#c4dbe6" stroke-width="1.2" fill="none"/><rect x="103" y="702.5" width="22.5" height="8.5" fill="#5a90b8" stroke="#1a2a38" stroke-width="0.7"/><rect x="104.5" y="704" width="15" height="3.2" fill="#202830"/><rect x="121" y="704" width="3" height="5" fill="#303840"/><path d="M103 718 L113 712 L125.5 716 L125 721 L114 727.5 L101.5 723 Z" fill="#52705a"/><path d="M101.5 723 L114 727.5 L125 721" fill="none" stroke="#c8c8c8" stroke-width="1.6"/><path d="M105 722 l2 1 M109 723.5 l2 1 M113 725 l2 0.6" stroke="#e0c060" stroke-width="1.2"/><ellipse cx="144.5" cy="715" rx="12" ry="8" fill="#a8d0e8"/><path d="M137 711 H151 M139 715 H149 M137 719 H150" stroke="#5aa0d0" stroke-width="1.2"/><rect x="175" y="639" width="1.2" height="99" fill="#a0a4b0" /><rect x="176" y="639" width="448" height="84" fill="#f8f8f8" /><rect x="180.3" y="653" width="35.5" height="35.5" rx="5.5" fill="url(#btn)" stroke="#a8a8a8" stroke-width="1"/><rect x="225.2" y="653" width="35.5" height="35.5" rx="5.5" fill="url(#btn)" stroke="#a8a8a8" stroke-width="1"/><rect x="270.2" y="653" width="35.5" height="35.5" rx="5.5" fill="url(#btn)" stroke="#a8a8a8" stroke-width="1"/><rect x="315.3" y="653" width="35.5" height="35.5" rx="5.5" fill="url(#btn)" stroke="#a8a8a8" stroke-width="1"/><rect x="360.5" y="653" width="35.5" height="35.5" rx="5.5" fill="url(#btn)" stroke="#a8a8a8" stroke-width="1"/><rect x="405.4" y="653" width="35.5" height="35.5" rx="5.5" fill="url(#btn)" stroke="#a8a8a8" stroke-width="1"/><rect x="450.5" y="653" width="35.5" height="35.5" rx="5.5" fill="url(#btn)" stroke="#a8a8a8" stroke-width="1"/><rect x="495.4" y="653" width="35.5" height="35.5" rx="5.5" fill="url(#btn)" stroke="#a8a8a8" stroke-width="1"/><rect x="540.2" y="653" width="35.5" height="35.5" rx="5.5" fill="url(#btn)" stroke="#a8a8a8" stroke-width="1"/><rect x="585.9" y="653" width="35.5" height="35.5" rx="5.5" fill="url(#btn)" stroke="#a8a8a8" stroke-width="1"/><path d="M200.8 661 L191.8 672 L198.8 671 L193.8 679 L203.8 667 L196.8 668 Z" fill="#f8c020" stroke="#f04010" stroke-width="0.9"/><path d="M232.7 680 Q238.7 664 251.7 661" fill="none" stroke="#20b8f0" stroke-width="2.2" stroke-linecap="round"/><path d="M278.7 679 L296.7 661" stroke="#000" stroke-width="3.5" stroke-linecap="round"/><path d="M323.8 679 L327.8 676 M336.8 666 L340.8 663" stroke="#000" stroke-width="3.5" stroke-linecap="round"/><path d="M369 679 L387 661" stroke="#ff6a00" stroke-width="3.5" stroke-linecap="round"/><path d="M425.1 661.3 L427.2 658.2 M419.5 666.4 L416.4 669 L421.5 670 M424.6 670.5 L429.2 671.6 L425.1 675.2 M419 680.8 L421 679.3" stroke="#000" stroke-width="2.3" fill="none" stroke-linecap="round"/><path d="M471.7 659.3 L461.5 669.5 L474.3 671.6 L464 681.3" fill="none" stroke="#0000f0" stroke-width="2"/><path d="M508.6 658.8 L498.4 669.5 L511.7 671 L501 681.3" fill="none" stroke="#ff0000" stroke-width="2"/><circle cx="520.4" cy="674.1" r="7.6" fill="#fff" stroke="#303030" stroke-width="0.9"/><path d="M520.6 669.5 V674 H524.5" stroke="#202020" stroke-width="1" fill="none"/><path d="M561.5 659.3 L551.3 669.5 L564.1 671.6 L553.8 681.3" fill="none" stroke="#ff0000" stroke-width="2"/><path d="M592.4 682 L614.4 660" stroke="#20d060" stroke-width="3.5" stroke-linecap="round"/><rect x="176" y="706" width="448" height="15" fill="#f0f0f0" /><rect x="193" y="706" width="369.5" height="15" fill="#cdcdcd" /><rect x="373" y="709" width="10" height="9" fill="#f0f0f0" /><path d="M186 710 L182.5 713.5 L186 717" fill="none" stroke="#505050" stroke-width="1.6"/><path d="M614 710 L617.5 713.5 L614 717" fill="none" stroke="#505050" stroke-width="1.6"/><rect x="175.5" y="722.5" width="448.5" height="16" fill="#fff" stroke="#000" stroke-width="1"/><text x="288" y="734.5" font-size="12" fill="#000" font-weight="normal" text-anchor="start" textLength="223" lengthAdjust="spacingAndGlyphs" >Automatically Choose Connection Type</text><rect x="624" y="639" width="1.2" height="99" fill="#a0a4b0" /><circle cx="647" cy="657.2" r="7" fill="url(#ig)"/><rect x="646" y="655" width="2" height="5.5" fill="#f0f000"/><circle cx="647" cy="652.5" r="1.1" fill="#f0f000"/><rect x="663.5" y="647.5" width="117" height="19" fill="#fff" stroke="#7a7a7a" stroke-width="1"/><text x="668.4" y="662" font-size="12" fill="#000" font-weight="normal" text-anchor="start" textLength="60" lengthAdjust="spacingAndGlyphs" >Scenario 0</text><path d="M768 656 L772 660 L776 656" fill="none" stroke="#404040" stroke-width="1.1"/><rect x="632.5" y="676.5" width="72" height="20.5" fill="#e1e1e1" stroke="#adadad" stroke-width="1"/><rect x="707.5" y="676.5" width="72.5" height="20.5" fill="#e1e1e1" stroke="#adadad" stroke-width="1"/><text x="668.5" y="691" font-size="12" fill="#000" font-weight="normal" text-anchor="middle" textLength="23" lengthAdjust="spacingAndGlyphs" >New</text><text x="743.5" y="691" font-size="12" fill="#000" font-weight="normal" text-anchor="middle" textLength="37" lengthAdjust="spacingAndGlyphs" >Delete</text><rect x="632.5" y="703.5" width="147.5" height="25" fill="#e1e1e1" stroke="#adadad" stroke-width="1"/><text x="638" y="720.5" font-size="12" fill="#000" font-weight="normal" text-anchor="start" textLength="136" lengthAdjust="spacingAndGlyphs" >Toggle PDU List Window</text><rect x="1358" y="639" width="8" height="99" fill="#f0f0f0" /><rect x="1362" y="639" width="1" height="99" fill="#d8d8d8" /><rect x="787.5" y="639.5" width="570" height="97" fill="#fff" stroke="#9098a8" stroke-width="1"/><text x="792" y="654.8" font-size="12" fill="#000" font-weight="normal" text-anchor="start" textLength="21" lengthAdjust="spacingAndGlyphs" >Fire</text><text x="840.4" y="654.8" font-size="12" fill="#000" font-weight="normal" text-anchor="start" textLength="63" lengthAdjust="spacingAndGlyphs" >Last Status</text><text x="936.4" y="654.8" font-size="12" fill="#000" font-weight="normal" text-anchor="start" textLength="39.5" lengthAdjust="spacingAndGlyphs" >Source</text><text x="992.6" y="654.8" font-size="12" fill="#000" font-weight="normal" text-anchor="start" textLength="63" lengthAdjust="spacingAndGlyphs" >Destination</text><text x="1088.6" y="654.8" font-size="12" fill="#000" font-weight="normal" text-anchor="start" textLength="26" lengthAdjust="spacingAndGlyphs" >Type</text><text x="1136" y="654.8" font-size="12" fill="#000" font-weight="normal" text-anchor="start" textLength="31" lengthAdjust="spacingAndGlyphs" >Color</text><text x="1184" y="654.8" font-size="12" fill="#000" font-weight="normal" text-anchor="start" textLength="54" lengthAdjust="spacingAndGlyphs" >Time(sec)</text><text x="1248" y="654.8" font-size="12" fill="#000" font-weight="normal" text-anchor="start" textLength="46" lengthAdjust="spacingAndGlyphs" >Periodic</text><text x="1312.5" y="654.8" font-size="12" fill="#000" font-weight="normal" text-anchor="start" textLength="25" lengthAdjust="spacingAndGlyphs" >Num</text><rect x="835.3" y="640" width="1" height="21" fill="#e0e0e0" /><rect x="931" y="640" width="1" height="21" fill="#e0e0e0" /><rect x="987.5" y="640" width="1" height="21" fill="#e0e0e0" /><rect x="1084" y="640" width="1" height="21" fill="#e0e0e0" /><rect x="1131.7" y="640" width="1" height="21" fill="#e0e0e0" /><rect x="1179.8" y="640" width="1" height="21" fill="#e0e0e0" /><rect x="1243.7" y="640" width="1" height="21" fill="#e0e0e0" /><rect x="1307" y="640" width="1" height="21" fill="#e0e0e0" /><rect x="1355.5" y="640" width="1" height="21" fill="#e0e0e0" /><rect x="788" y="720" width="569" height="16" fill="#f0f0f0" /><rect x="805" y="720" width="447" height="16" fill="#cdcdcd" /><rect x="1023" y="723" width="10" height="9" fill="#f0f0f0" /><path d="M799 724.5 L795.5 728 L799 731.5" fill="none" stroke="#505050" stroke-width="1.6"/><path d="M1347 724.5 L1350.5 728 L1347 731.5" fill="none" stroke="#505050" stroke-width="1.6"/><defs><linearGradient id="tk" x1="0" y1="0" x2="1" y2="0"><stop offset="0" stop-color="#0c0c0c"/><stop offset="0.5" stop-color="#121416"/><stop offset="1" stop-color="#0c0c0c"/></linearGradient></defs><rect x="0" y="738" width="1366" height="30" fill="url(#tk)" /><path d="M10 746.5 L16.8 745.5 V752.3 H10 Z M17.8 745.3 L26.5 744 V752.3 H17.8 Z M10 753.3 H16.8 V760.2 L10 759.2 Z M17.8 753.3 H26.5 V761.5 L17.8 760.3 Z" fill="#fff"/><circle cx="56.5" cy="750.5" r="5.2" fill="none" stroke="#fff" stroke-width="1.3"/><line x1="52.8" y1="754.2" x2="47" y2="760" stroke="#fff" stroke-width="1.4"/><rect x="84.5" y="746" width="8" height="6.5" rx="1.5" fill="#f0f0f0"/><rect x="93.5" y="746" width="8" height="6.5" rx="1.5" fill="#f0f0f0"/><rect x="88.5" y="753" width="8" height="6.5" rx="1.5" fill="#f0f0f0"/><text x="88.5" y="751.5" font-size="6" font-weight="bold" fill="#d02020" text-anchor="middle">u</text><text x="97.5" y="751.5" font-size="6" font-weight="bold" fill="#d02020" text-anchor="middle">i</text><text x="92.5" y="758.5" font-size="6" font-weight="bold" fill="#d02020" text-anchor="middle">n</text><path d="M121 747 H128 L130 749 H137.5 V760 H121 Z" fill="#f8c840"/><rect x="121" y="751" width="16.5" height="9" fill="#ffd860"/><rect x="126" y="754" width="6" height="6" fill="#2a90d8"/><ellipse cx="165" cy="753" rx="5.5" ry="7" fill="#50b030"/><circle cx="163" cy="748" r="3" fill="#e03030"/><path d="M168 757 L172 761" stroke="#e0a020" stroke-width="2"/><circle cx="203" cy="752.5" r="8" fill="#e8eef8" stroke="#2050a0" stroke-width="1.5"/><path d="M199 747 L207 758 M196 753 H210" stroke="#c02020" stroke-width="1.5"/><circle cx="240" cy="752.5" r="8" fill="#db4437"/><path d="M240 752.5 L247 756.5 A8 8 0 0 1 233 756.5 Z" fill="#0f9d58"/><path d="M240 752.5 L233 756.5 A8 8 0 0 1 240 744.5 Z" fill="#0f9d58" opacity="0"/><path d="M233.07 756.5 A8 8 0 0 1 236 745.6 L240 752.5 Z" fill="#0f9d58"/><path d="M240 744.5 A8 8 0 0 1 247.5 756 L240 752.5 Z" fill="#ffcd40" opacity="0"/><path d="M247 756.5 A8 8 0 0 1 240 760.5 L240 752.5Z" fill="#ffcd40"/><circle cx="240" cy="752.5" r="3.6" fill="#4285f4" stroke="#fff" stroke-width="1.2"/><circle cx="277" cy="752.5" r="7.8" fill="#f07010"/><circle cx="278.5" cy="751" r="5" fill="#2a5ab8"/><path d="M270 748 Q268.5 757 275 760 Q283 761.5 284.5 754 Q282 758 277 757.5 Q272 756 272.5 750 Z" fill="#f88010"/><path d="M276 745 Q281 744 283.5 748 Q280 746 277 747 Z" fill="#f8b020"/><rect x="306" y="745" width="16" height="15.5" fill="#1a2a00" stroke="#a0e000" stroke-width="1"/><text x="314" y="756.5" font-size="9" font-weight="bold" fill="#a0e000" text-anchor="middle">Dw</text><rect x="343" y="745" width="16" height="15.5" fill="#001828" stroke="#30b0f0" stroke-width="1"/><text x="351" y="756.5" font-size="9" font-weight="bold" fill="#30b0f0" text-anchor="middle">Ps</text><rect x="380" y="745" width="16" height="15.5" fill="#002018" stroke="#40d8a8" stroke-width="1"/><text x="388" y="756.5" font-size="9" font-weight="bold" fill="#40d8a8" text-anchor="middle">Au</text><rect x="417" y="745" width="16" height="15.5" fill="#1a0828" stroke="#d080f0" stroke-width="1"/><text x="425" y="756.5" font-size="9" font-weight="bold" fill="#d080f0" text-anchor="middle">Pr</text><rect x="454" y="745" width="16" height="15.5" fill="#120a28" stroke="#a8a0ff" stroke-width="1"/><text x="462" y="756.5" font-size="9" font-weight="bold" fill="#a8a0ff" text-anchor="middle">Ae</text><rect x="496" y="746" width="11" height="13" fill="#e8eef8"/><path d="M490.5 746.5 L500 745 V760.5 L490.5 759 Z" fill="#2a5aa8"/><text x="495" y="756" font-size="7.5" font-weight="bold" fill="#fff" text-anchor="middle">W</text><path d="M501 749 H505.5 M501 752 H505.5 M501 755 H505.5" stroke="#2a5aa8" stroke-width="1"/><circle cx="536" cy="749" r="3.5" fill="#c02020"/><path d="M530 761 Q530 752 536 752 Q542 752 542 761 Z" fill="#c02020"/><rect x="570" y="746" width="11" height="13" fill="#f8e0d8"/><path d="M564.5 746.5 L574 745 V760.5 L564.5 759 Z" fill="#d04a20"/><text x="569.2" y="756" font-size="8" font-weight="bold" fill="#fff" text-anchor="middle">P</text><rect x="575" y="748" width="5" height="9" fill="#d04a20"/><rect x="602" y="745" width="17" height="16" fill="#f08a20"/><path d="M614 745 L619 745 L619 750 Z" fill="#fff"/><circle cx="610" cy="753" r="3.5" fill="none" stroke="#fff" stroke-width="1.6"/><rect x="639.5" y="746.5" width="15" height="12" fill="#2878c8" /><rect x="641" y="748" width="12" height="9" fill="#c8e0f0"/><path d="M641 757 L645 752 L649 755 L653 751 V757 Z" fill="#6098c0"/><rect x="666" y="738" width="32" height="30" fill="#3a3a3a" /><path d="M676 750 L684 745 L692 747 L692 753 L684 757 L676 754 Z" fill="#c8a850" stroke="#5a4a20" stroke-width="0.8"/><circle cx="681" cy="754" r="4" fill="#e0c020" stroke="#303010" stroke-width="0.8"/><line x1="684" y1="757" x2="688" y2="761" stroke="#c0c0c0" stroke-width="1.2"/><rect x="719" y="746" width="11" height="13" fill="#e0f0e0"/><path d="M713.5 746.5 L723 745 V760.5 L713.5 759 Z" fill="#1e7a40"/><text x="718.2" y="756" font-size="8" font-weight="bold" fill="#fff" text-anchor="middle">X</text><path d="M724 749 H729 M724 752 H729 M724 755 H729 M726.5 747 V759" stroke="#1e7a40" stroke-width="0.9"/><rect x="115.4" y="766" width="27.900000000000006" height="2" fill="#8ac8f0" /><rect x="226" y="766" width="27.69999999999999" height="2" fill="#8ac8f0" /><rect x="485.4" y="766" width="27.899999999999977" height="2" fill="#8ac8f0" /><rect x="596" y="766" width="27.700000000000045" height="2" fill="#8ac8f0" /><rect x="633" y="766" width="27.700000000000045" height="2" fill="#8ac8f0" /><rect x="666" y="766" width="32" height="2" fill="#8ac8f0" /><rect x="706.6" y="766" width="27.799999999999955" height="2" fill="#8ac8f0" /><path d="M1154 756 L1159.5 750.5 L1165 756" fill="none" stroke="#fff" stroke-width="1.2"/><rect x="1175" y="745" width="15.5" height="15.5" fill="#e8b0b0"/><path d="M1178 748 L1183 758 L1188 748" fill="none" stroke="#d02020" stroke-width="2.2"/><path d="M1201 747 V751 M1204 747 V751 M1200 751 H1205 V753 Q1205 755 1202.5 755 V758" stroke="#fff" stroke-width="1.1" fill="none"/><rect x="1206" y="750" width="8" height="7" fill="none" stroke="#fff" stroke-width="1.1"/><rect x="1207.5" y="751.5" width="5" height="4" fill="#fff"/><rect x="1214" y="752" width="1.2" height="3" fill="#fff"/><path d="M1227 760 A11 11 0 0 1 1238 749 M1230 760 A8 8 0 0 1 1238 752 M1233 760 A5 5 0 0 1 1238 755" fill="none" stroke="#fff" stroke-width="1.1"/><rect x="1235" y="757" width="3.5" height="3.5" fill="#fff"/><path d="M1247 750 H1250 L1254 746 V759 L1250 755 H1247 Z" fill="none" stroke="#fff" stroke-width="1.1"/><path d="M1256 749.5 Q1258.5 752.5 1256 755.5 M1258.5 747.5 Q1262 752.5 1258.5 757.5 M1261 745.5 Q1265.5 752.5 1261 759.5" fill="none" stroke="#fff" stroke-width="1.1"/><path d="M1271 745 H1287 V757 H1281.5 L1279 760 L1276.5 757 H1271 Z" fill="#fff"/><path d="M1274 748.5 H1284 M1274 751 H1284 M1274 753.5 H1281" stroke="#101010" stroke-width="1"/><text x="1302" y="756" font-size="12" fill="#ffffff" font-weight="normal" text-anchor="start" textLength="47.4" lengthAdjust="spacingAndGlyphs" >10:54 AM</text><rect x="1361" y="738" width="1" height="30" fill="#606060" /></svg></body></html>
